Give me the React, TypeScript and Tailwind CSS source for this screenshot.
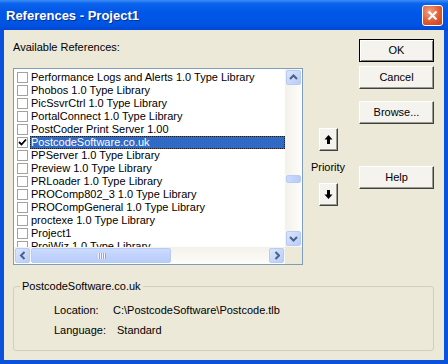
import { ReactNode } from 'react';
import clsx from 'clsx';

const refs = [
  'Performance Logs and Alerts 1.0 Type Library',
  'Phobos 1.0 Type Library',
  'PicSsvrCtrl 1.0 Type Library',
  'PortalConnect 1.0 Type Library',
  'PostCoder Print Server 1.00',
  'PostcodeSoftware.co.uk',
  'PPServer 1.0 Type Library',
  'Preview 1.0 Type Library',
  'PRLoader 1.0 Type Library',
  'PROComp802_3 1.0 Type Library',
  'PROCompGeneral 1.0 Type Library',
  'proctexe 1.0 Type Library',
  'Project1',
  'ProjWiz 1.0 Type Library',
];

const SELECTED = 5;

const Chevron = ({ dir }: { dir: 'up' | 'down' | 'left' | 'right' }) => {
  const d = {
    up: 'M1 5 L4.5 1.5 L8 5',
    down: 'M1 2 L4.5 5.5 L8 2',
    left: 'M5.5 1 L2 4.5 L5.5 8',
    right: 'M2.5 1 L6 4.5 L2.5 8',
  }[dir];
  const vertical = dir === 'up' || dir === 'down';
  return (
    <svg
      width={vertical ? 9 : 7}
      height={vertical ? 7 : 9}
      viewBox={vertical ? '0 0 9 7' : '0 0 7 9'}
    >
      <path d={d} fill="none" stroke="#4d6185" strokeWidth="2" />
    </svg>
  );
};

const ScrollBtn = ({ dir }: { dir: 'up' | 'down' | 'left' | 'right' }) => (
  <div className="w-[17px] h-[17px] p-[1px] shrink-0">
    <div className="w-full h-full rounded-[2px] border border-[#b9cbf3] bg-gradient-to-br from-[#dbe6fd] to-[#b7ccf8] flex items-center justify-center">
      <Chevron dir={dir} />
    </div>
  </div>
);

const Check = () => (
  <svg width="9" height="9" viewBox="0 0 9 9">
    <path d="M1 4 L3.5 6.5 L8 1.5" fill="none" stroke="#000" strokeWidth="1.8" />
  </svg>
);

const Button = ({ children, def }: { children: ReactNode; def?: boolean }) => (
  <button
    className={clsx(
      'w-[75px] h-[23px] bg-[#f4f3ee] text-black text-[11px] leading-[13px]',
      def
        ? 'border border-black shadow-[inset_1px_1px_0_#fff,inset_-1px_-1px_0_#808080]'
        : 'border border-t-white border-l-white border-r-[#404040] border-b-[#404040] shadow-[inset_-1px_-1px_0_#9a9a94]'
    )}
  >
    {children}
  </button>
);

const ArrowBtn = ({ up }: { up?: boolean }) => (
  <button className="w-[19px] h-[23px] bg-[#f4f3ee] border border-t-white border-l-white border-r-[#404040] border-b-[#404040] shadow-[inset_-1px_-1px_0_#9a9a94] flex items-center justify-center">
    <svg width="9" height="11" viewBox="0 0 9 11" className={up ? '' : 'rotate-180'}>
      <path d="M4.5 1 L8.5 5.5 L6 5.5 L6 10 L3 10 L3 5.5 L0.5 5.5 Z" fill="#000" />
    </svg>
  </button>
);

const App = () => {
  return (
    <div className="w-[448px] h-[364px] bg-[#0a52dc] flex flex-col font-['Liberation_Sans',Arial,sans-serif] text-[11px] leading-[13px] text-black overflow-hidden">
      {/* title bar */}
      <div className="h-[30px] shrink-0 flex items-center pl-[6px] pr-[5px] bg-[linear-gradient(180deg,#3b8df6_0%,#0c63ec_12%,#0057e8_40%,#0054e3_80%,#0048d6_100%)]">
        <span className="text-white font-bold text-[13px] [text-shadow:1px_1px_0_#0a2f8f] grow">
          References - Project1
        </span>
        <div className="w-[21px] h-[21px] rounded-[3px] border border-white bg-[radial-gradient(circle_at_35%_30%,#f2a184_0%,#e25a32_55%,#c8401c_100%)] flex items-center justify-center">
          <svg width="11" height="11" viewBox="0 0 11 11">
            <path d="M1.5 1.5 L9.5 9.5 M9.5 1.5 L1.5 9.5" stroke="#fff" strokeWidth="2.2" />
          </svg>
        </div>
      </div>

      {/* body */}
      <div className="flex-1 mx-[4px] mb-[4px] bg-[#ece9d8] pl-[9px] pt-[9px]">
        <div className="flex">
          <div className="w-[290px] pt-[2px]">
            <p className="mb-[14px]">Available References:</p>
            <div className="h-[197px] border border-[#7f9db9] bg-white grid grid-cols-[1fr_17px] grid-rows-[1fr_17px]">
              <div className="overflow-hidden pt-[2px]">
                {refs.map((r, i) => (
                  <div key={r} className="h-[13px] flex items-center">
                    <div className="ml-[3px] mr-[2px] w-[11px] h-[11px] border border-[#a3a39d] bg-white flex items-center justify-center shrink-0">
                      {i === SELECTED && <Check />}
                    </div>
                    <div
                      className={clsx(
                        'h-[13px] flex items-center pl-[1px] whitespace-nowrap',
                        i === SELECTED &&
                          'grow bg-[#316ac5] text-white outline-1 outline-dotted outline-offset-[-1px] outline-[#1c1c1c]'
                      )}
                    >
                      {r}
                    </div>
                  </div>
                ))}
              </div>
              <div className="flex flex-col bg-gradient-to-r from-[#f3f1ea] to-[#fdfdfa]">
                <ScrollBtn dir="up" />
                <div className="grow">
                  <div className="mt-[89px] mx-[1px] h-[8px] rounded-[2px] border border-[#b9cbf3] bg-gradient-to-r from-[#cbdaff] to-[#b7ccf8]" />
                </div>
                <ScrollBtn dir="down" />
              </div>
              <div className="flex bg-gradient-to-b from-[#f3f1ea] to-[#fdfdfa]">
                <ScrollBtn dir="left" />
                <div className="grow">
                  <div className="my-[1px] w-[140px] h-[15px] rounded-[2px] border border-[#b9cbf3] bg-gradient-to-b from-[#cbdaff] to-[#b7ccf8] flex items-center justify-center gap-[1px]">
                    {[0, 1, 2, 3].map((k) => (
                      <span key={k} className="w-[1px] h-[6px] bg-[#eef3ff] shadow-[1px_0_0_#8ca8e6]" />
                    ))}
                  </div>
                </div>
                <ScrollBtn dir="right" />
              </div>
              <div className="bg-[#ece9d8]" />
            </div>
          </div>

          {/* priority */}
          <div className="ml-[7px] w-[36px] pt-[89px] flex flex-col items-center">
            <ArrowBtn up />
            <span className="mt-[10px]">Priority</span>
            <div className="mt-[9px]">
              <ArrowBtn />
            </div>
          </div>

          {/* buttons */}
          <div className="ml-[13px] flex flex-col">
            <Button def>OK</Button>
            <div className="mt-[4px]">
              <Button>Cancel</Button>
            </div>
            <div className="mt-[12px]">
              <Button>Browse...</Button>
            </div>
            <div className="mt-[42px]">
              <Button>Help</Button>
            </div>
          </div>
        </div>

        <fieldset className="mt-[15px] w-[421px] border border-[#d0d0bf] rounded-[3px] pb-[13px]">
          <legend className="ml-[6px] px-[2px]">PostcodeSoftware.co.uk</legend>
          <div className="pl-[40px] pt-[11px] flex flex-col gap-[7px]">
            <div className="flex">
              <span className="w-[59px]">Location:</span>
              <span>C:\PostcodeSoftware\Postcode.tlb</span>
            </div>
            <div className="flex">
              <span className="w-[63px]">Language:</span>
              <span>Standard</span>
            </div>
          </div>
        </fieldset>
      </div>
    </div>
  );
};

export default App;
